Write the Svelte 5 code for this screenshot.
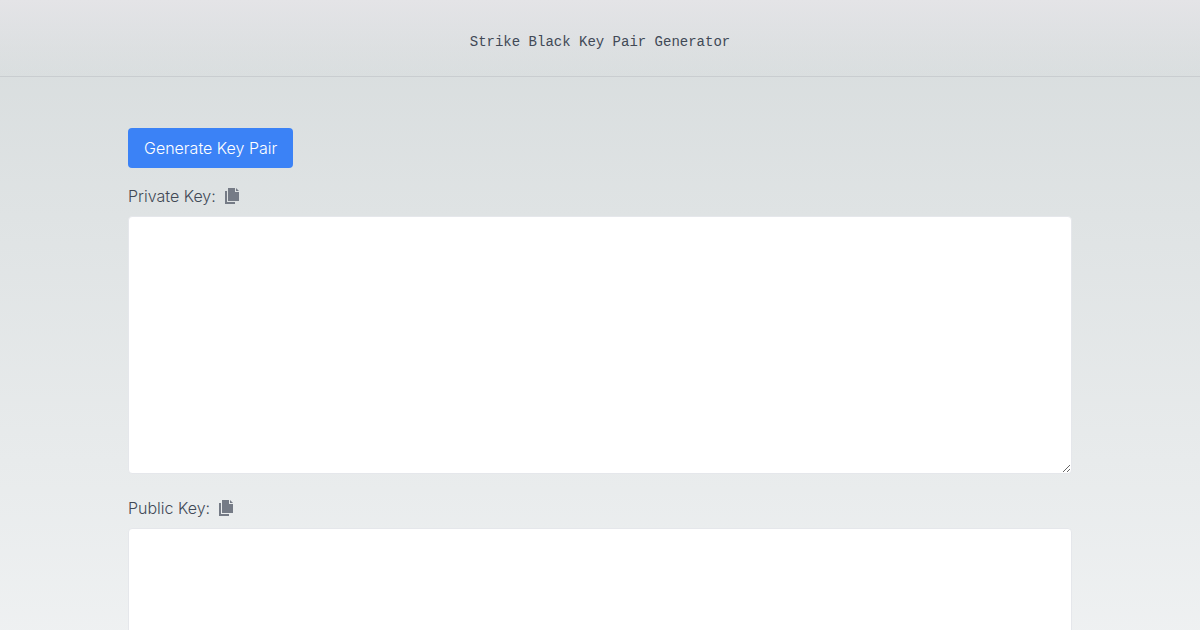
<script>
    let keys = $state([
        { id: "private-key", label: "Private Key:", value: "" },
        { id: "public-key", label: "Public Key:", value: "" },
    ]);

    function toPem(buffer, type) {
        const base64 = btoa(String.fromCharCode(...new Uint8Array(buffer)));
        const lines = base64.match(/.{1,64}/g).join("\n");
        return `-----BEGIN ${type} KEY-----\n${lines}\n-----END ${type} KEY-----`;
    }

    async function generateKeyPair() {
        const pair = await crypto.subtle.generateKey(
            { name: "ECDSA", namedCurve: "P-256" },
            true,
            ["sign", "verify"]
        );
        keys[0].value = toPem(await crypto.subtle.exportKey("pkcs8", pair.privateKey), "PRIVATE");
        keys[1].value = toPem(await crypto.subtle.exportKey("spki", pair.publicKey), "PUBLIC");
    }

    function copy(text) {
        navigator.clipboard.writeText(text);
    }
</script>

<div class="page">
    <header>
        <p>Strike Black Key Pair Generator</p>
    </header>

    <main>
        <button class="generate" onclick={generateKeyPair}>Generate Key Pair</button>

        {#each keys as key}
            <div class="field">
                <div class="label-row">
                    <label for={key.id}>{key.label}</label>
                    <button class="copy" aria-label="Copy" onclick={() => copy(key.value)}>
                        <svg width="16" height="16" viewBox="0 0 16 16" fill="currentColor">
                            <path d="M1 3h2v11h8v2H1z" />
                            <path d="M4 0h7v4h4v9H4z" />
                            <path d="M12 0l3 3h-3z" />
                        </svg>
                    </button>
                </div>
                <textarea id={key.id} rows="10" readonly value={key.value}></textarea>
            </div>
        {/each}
    </main>
</div>

<style>
    :global(body) {
        margin: 0;
    }

    .page {
        background: linear-gradient(to bottom, rgb(215, 220, 221), rgb(249, 250, 251));
        color: #414956;
        font-family: Inter, sans-serif;
        font-size: 16px;
        font-weight: 350;
        line-height: 24px;
    }

    header {
        padding: 32px 16px 24px;
        border-bottom: 1px solid #c9cdd0;
        background: linear-gradient(to bottom, #e4e4e7, rgba(228, 228, 231, 0));
        text-align: center;
    }

    header p {
        margin: 0;
        font-family: Courier, "Courier New", "Liberation Mono", monospace;
        font-size: 14px;
        line-height: 20px;
    }

    main {
        padding: 51px 128px 128px;
    }

    button {
        border: 0;
        font: inherit;
        cursor: pointer;
    }

    .generate {
        display: block;
        padding: 8px 16px;
        border-radius: 4px;
        background: #3b82f6;
        color: #fff;
    }

    .field {
        margin-top: 16px;
    }

    .label-row {
        display: flex;
        align-items: center;
        gap: 8px;
        margin-bottom: 8px;
    }

    .copy {
        display: flex;
        padding: 0;
        background: none;
        color: #757b86;
    }

    textarea {
        box-sizing: border-box;
        width: 100%;
        padding: 8px;
        border: 1px solid #e5e7eb;
        border-radius: 4px;
        background: #fff;
        color: inherit;
        font: inherit;
        resize: both;
    }
</style>
